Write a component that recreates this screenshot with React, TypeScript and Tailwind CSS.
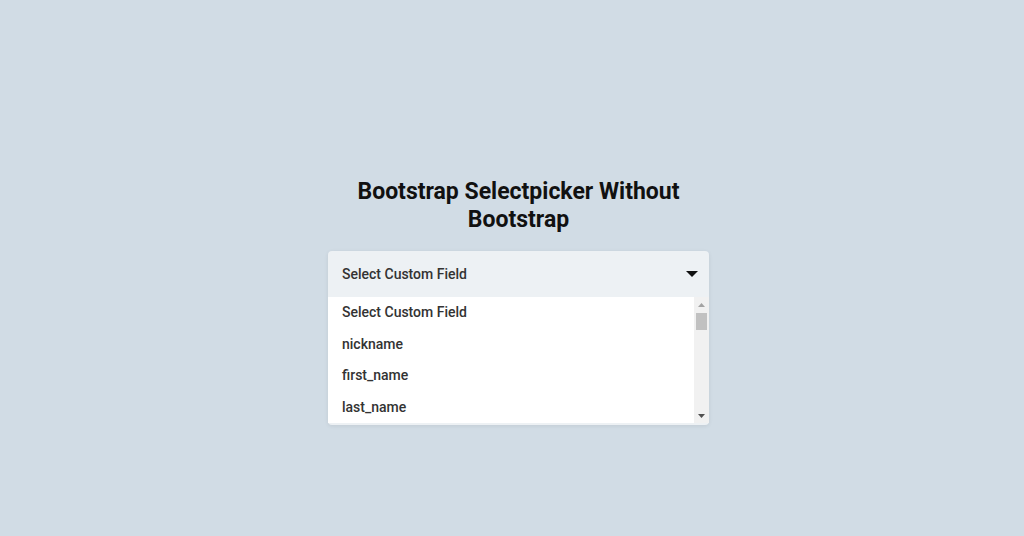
import React from "react";

const OPTIONS = ["Select Custom Field", "nickname", "first_name", "last_name"];

export default function App() {
  return (
    <div
      className="min-h-screen w-full bg-[#d1dce5] flex flex-col items-center pt-[178px]"
      style={{ fontFamily: "Roboto, 'Liberation Sans', sans-serif" }}
    >
      <div className="w-[381px] ml-[13px] flex flex-col">
        {/* Title */}
        <h1 className="text-center text-[23px] leading-[28px] font-bold text-[#111]">
          Bootstrap Selectpicker Without Bootstrap
        </h1>

        {/* Select card */}
        <div className="mt-[17px] rounded-[4px] bg-[#edf1f4] shadow-[0_1px_4px_rgba(0,0,0,0.08)] pb-[2px]">
          <div className="h-[46px] flex items-center justify-between pl-[14px] pr-[10px]">
            <span className="text-[14px] font-medium text-[#333]">Select Custom Field</span>
            <svg width="14" height="8" viewBox="0 0 14 8">
              <path d="M1 1 L13 1 L7 7 Z" fill="#111" />
            </svg>
          </div>

          {/* Options list */}
          <div className="flex h-[126px] bg-white">
            <ul className="flex-1">
              {OPTIONS.map((opt) => (
                <li
                  key={opt}
                  className="h-[31.5px] flex items-center pl-[14px] text-[14px] font-medium text-[#333]"
                >
                  {opt}
                </li>
              ))}
            </ul>
            {/* Scrollbar */}
            <div className="w-[15px] bg-[#f1f1f1] flex flex-col items-center">
              <div className="h-[15px] flex items-center justify-center">
                <svg width="7" height="4" viewBox="0 0 7 4">
                  <path d="M0 4 L7 4 L3.5 0 Z" fill="#a3a3a3" />
                </svg>
              </div>
              <div className="w-[11px] h-[17px] bg-[#c1c1c1] mt-px" />
              <div className="flex-1" />
              <div className="h-[15px] flex items-center justify-center">
                <svg width="7" height="4" viewBox="0 0 7 4">
                  <path d="M0 0 L7 0 L3.5 4 Z" fill="#505050" />
                </svg>
              </div>
            </div>
          </div>
        </div>
      </div>
    </div>
  );
}
